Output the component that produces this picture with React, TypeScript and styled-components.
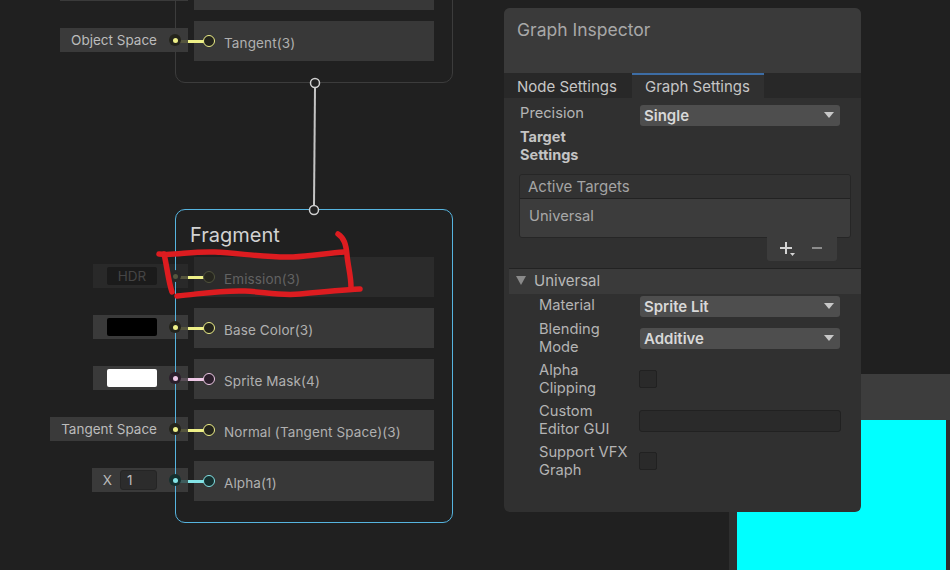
import styled, { createGlobalStyle } from 'styled-components';

type PortKind = 'yellow' | 'pink' | 'cyan';

const portColors: Record<PortKind, { line: string; fill: string; dim: string }> = {
  yellow: { line: '#eef088', fill: '#24241c', dim: '#55553e' },
  pink: { line: '#eec8e6', fill: '#2c1f2c', dim: '#5a4f58' },
  cyan: { line: '#84e4e7', fill: '#15302f', dim: '#3f5c5c' },
};

const GlobalStyle = createGlobalStyle`
  html, body {
    margin: 0;
    padding: 0;
    background: #202020;
    overflow: hidden;
  }
  * {
    box-sizing: border-box;
  }
`;

const Canvas = styled.div`
  position: relative;
  width: 950px;
  height: 570px;
  overflow: hidden;
  background: #202020;
  font-family: Inter, 'Liberation Sans', sans-serif;
  font-size: 14px;
  color: #b8b8b8;
`;

const Node = styled.div<{ $top: number; $height: number; $active?: boolean }>`
  position: absolute;
  left: 175px;
  top: ${(p) => p.$top}px;
  width: 278px;
  height: ${(p) => p.$height}px;
  padding: 0 0 22px 19px;
  display: flex;
  flex-direction: column;
  justify-content: flex-end;
  gap: 11px;
  &::after {
    content: '';
    position: absolute;
    inset: 0;
    border: 1px solid ${(p) => (p.$active ? '#56b4df' : '#3c3c3c')};
    border-radius: 10px;
    pointer-events: none;
    z-index: 1;
  }
`;

const NodeTitle = styled.div`
  margin-left: -4px;
  margin-bottom: -2px;
  font-size: 20px;
  line-height: 26px;
  color: #d2d2d2;
`;

const Row = styled.div<{ $dim?: boolean }>`
  position: relative;
  flex: none;
  width: 240px;
  height: 40px;
  padding: 13px 0 0 30px;
  font-size: 13.5px;
  letter-spacing: 0.12px;
  line-height: 18px;
  background: ${(p) => (p.$dim ? '#2b2b2b' : '#383838')};
  color: ${(p) => (p.$dim ? '#626262' : '#b0b0b0')};
`;

const Chip = styled.div<{ $dim?: boolean; $width?: number }>`
  position: absolute;
  right: calc(100% + 6px);
  top: 7px;
  height: 24px;
  width: ${(p) => (p.$width ? `${p.$width}px` : 'auto')};
  display: flex;
  align-items: center;
  justify-content: flex-end;
  padding-left: 11px;
  padding-right: 7px;
  white-space: nowrap;
  letter-spacing: 0;
  background: ${(p) => (p.$dim ? '#292929' : '#3a3a3a')};
  color: #bcbcbc;
`;

const Swatch = styled.div<{ $color: string }>`
  width: 50px;
  height: 18px;
  margin-left: 3px;
  border-radius: 2px;
  background: ${(p) => p.$color};
  display: flex;
  align-items: center;
  justify-content: center;
  color: #454545;
`;

const AxisLabel = styled.span`
  margin-right: 8px;
`;

const NumberField = styled.div`
  width: 37px;
  height: 20px;
  padding-left: 6px;
  line-height: 19px;
  border: 1px solid #252525;
  border-radius: 3px;
  background: #2c2c2c;
`;

const Dot = styled.span<{ $kind: PortKind; $dim?: boolean }>`
  position: relative;
  z-index: 2;
  flex: none;
  width: 12px;
  height: 12px;
  margin-left: 12px;
  border-radius: 50%;
  background: ${(p) => (p.$dim ? '#272727' : portColors[p.$kind].fill)};
  &::after {
    content: '';
    position: absolute;
    left: 3.5px;
    top: 3.5px;
    width: 5px;
    height: 5px;
    border-radius: 50%;
    background: ${(p) => (p.$dim ? '#55563f' : portColors[p.$kind].line)};
  }
`;

const Wire = styled.span<{ $kind: PortKind }>`
  position: absolute;
  left: -14px;
  top: 19px;
  width: 8px;
  height: 2.5px;
  background: ${(p) => portColors[p.$kind].dim};
  &::after {
    content: '';
    position: absolute;
    left: 8px;
    top: 0;
    width: 16px;
    height: 2.5px;
    background: ${(p) => portColors[p.$kind].line};
  }
`;

const Port = styled.span<{ $kind: PortKind; $dim?: boolean }>`
  position: absolute;
  left: 9px;
  top: 14px;
  width: 12px;
  height: 12px;
  border-radius: 50%;
  border: 1.5px solid ${(p) => (p.$dim ? '#50523c' : portColors[p.$kind].line)};
  background: ${(p) => (p.$dim ? '#26261f' : portColors[p.$kind].fill)};
`;

const Overlay = styled.svg`
  position: absolute;
  left: 0;
  top: 0;
  z-index: 3;
  pointer-events: none;
`;

const Preview = styled.div`
  position: absolute;
  left: 729px;
  top: 374px;
  right: 0;
  bottom: 0;
  display: flex;
  flex-direction: column;
  background: #2e2e2e;
`;

const PreviewHeader = styled.div`
  flex: none;
  height: 46px;
  background: #3d3d3d;
`;

const PreviewImage = styled.div`
  flex: 1;
  margin: 0 4px 0 8px;
  background: #00ffff;
`;

const Inspector = styled.div`
  position: absolute;
  z-index: 5;
  left: 504px;
  top: 8px;
  width: 357px;
  height: 504px;
  display: flex;
  flex-direction: column;
  border-radius: 6px;
  overflow: hidden;
  background: #303030;
`;

const InspectorHeader = styled.div`
  flex: none;
  height: 65px;
  padding: 10px 13px 0;
  font-size: 17.5px;
  line-height: 24px;
  color: #a8a8a8;
  background: #3a3a3a;
`;

const Tabs = styled.div`
  flex: none;
  display: flex;
  height: 25px;
  background: #282828;
`;

const Tab = styled.div<{ $active?: boolean }>`
  padding-left: 13px;
  width: ${(p) => (p.$active ? '132px' : '128px')};
  font-size: 15px;
  line-height: 23px;
  color: #c6c6c6;
  border-top: 2px solid ${(p) => (p.$active ? '#3d6da5' : 'transparent')};
  background: ${(p) => (p.$active ? '#303030' : 'transparent')};
`;

const Body = styled.div`
  flex: 1;
  display: flex;
  flex-direction: column;
  padding-top: 6px;
`;

const FieldRow = styled.div<{ $indent?: boolean }>`
  display: flex;
  align-items: flex-start;
  margin-bottom: 5px;
  padding-left: ${(p) => (p.$indent ? 35 : 16)}px;
`;

const FieldLabel = styled.div<{ $indent?: boolean }>`
  flex: none;
  width: ${(p) => (p.$indent ? 101 : 120)}px;
  padding-right: 6px;
  line-height: 18px;
  font-size: 14.7px;
  color: #b4b4b4;
`;

const HeadingLabel = styled.div`
  width: 90px;
  margin: -1px 0 0 16px;
  font-weight: 700;
  font-size: 14.5px;
  line-height: 18px;
  color: #c4c4c4;
`;

const Dropdown = styled.div<{ $top?: number }>`
  position: relative;
  width: 200px;
  height: 21px;
  margin-top: ${(p) => p.$top ?? 0}px;
  margin-bottom: -2px;
  padding-left: 4px;
  font-weight: 600;
  font-size: 15px;
  line-height: 21px;
  color: #d8d8d8;
  background: #4e4e4e;
  border-radius: 3px;
  &::after {
    content: '';
    position: absolute;
    right: 6px;
    top: 7px;
    border-style: solid;
    border-width: 6px 5px 0;
    border-color: #c8c8c8 transparent transparent;
  }
`;

const Checkbox = styled.div`
  width: 18px;
  height: 18px;
  margin: 9px 0 0 -1px;
  background: #2a2a2a;
  border: 1px solid #212121;
  border-radius: 2px;
`;

const TextField = styled.div`
  width: 202px;
  height: 22px;
  margin: 8px 0 0 -1px;
  background: #2a2a2a;
  border: 1px solid #212121;
  border-radius: 3px;
`;

const ListBox = styled.div`
  width: 332px;
  margin: 10px 0 0 15px;
  border-radius: 3px;
  overflow: hidden;
  border: 1px solid #262626;
`;

const ListHeader = styled.div`
  height: 24px;
  padding-left: 8px;
  font-size: 15px;
  line-height: 23px;
  color: #a4a4a4;
  background: #323232;
  border-bottom: 1px solid #222;
`;

const ListBody = styled.div`
  height: 38px;
  padding: 8px 0 0 9px;
  font-size: 14.7px;
  line-height: 18px;
  color: #a8a8a8;
  background: #3c3c3c;
`;

const ListFooter = styled.div`
  align-self: flex-end;
  width: 70px;
  height: 24px;
  margin-right: 24px;
  margin-top: -1px;
  background: #3c3c3c;
  border-radius: 0 0 3px 3px;
`;

const Foldout = styled.div`
  display: flex;
  align-items: center;
  height: 26px;
  margin: 7px 0 2px 5px;
  padding: 0 0 2px 7px;
  border-top: 1px solid #222;
  background: #3a3a3a;
  line-height: 24px;
  font-size: 15px;
  color: #b8b8b8;
  &::before {
    content: '';
    margin-right: 8px;
    border-style: solid;
    border-width: 9px 5px 0;
    border-color: #8a8a8a transparent transparent;
  }
`;

function App() {
  return (
    <Canvas>
      <GlobalStyle />

      <Node $top={-113} $height={196}>
        <Row>
          <Chip $width={128}>
            <Dot $kind="yellow" />
          </Chip>
        </Row>
        <Row>
          <Chip>
            Object Space
            <Dot $kind="yellow" />
          </Chip>
          <Wire $kind="yellow" />
          <Port $kind="yellow" />
          Tangent(3)
        </Row>
      </Node>

      <Node $top={209} $height={314} $active>
        <NodeTitle>Fragment</NodeTitle>
        <Row $dim>
          <Chip $dim>
            <Swatch $color="#1b1b1b">HDR</Swatch>
            <Dot $kind="yellow" $dim />
          </Chip>
          <Wire $kind="yellow" />
          <Port $kind="yellow" $dim />
          Emission(3)
        </Row>
        <Row>
          <Chip>
            <Swatch $color="#000000" />
            <Dot $kind="yellow" />
          </Chip>
          <Wire $kind="yellow" />
          <Port $kind="yellow" />
          Base Color(3)
        </Row>
        <Row>
          <Chip>
            <Swatch $color="#ffffff" />
            <Dot $kind="pink" />
          </Chip>
          <Wire $kind="pink" />
          <Port $kind="pink" />
          Sprite Mask(4)
        </Row>
        <Row>
          <Chip>
            Tangent Space
            <Dot $kind="yellow" />
          </Chip>
          <Wire $kind="yellow" />
          <Port $kind="yellow" />
          Normal (Tangent Space)(3)
        </Row>
        <Row>
          <Chip>
            <AxisLabel>X</AxisLabel>
            <NumberField>1</NumberField>
            <Dot $kind="cyan" />
          </Chip>
          <Wire $kind="cyan" />
          <Port $kind="cyan" />
          Alpha(1)
        </Row>
      </Node>

      <Overlay width="950" height="570" viewBox="0 0 950 570">
        <path d="M315 88 L314 205" stroke="#c4c4c4" strokeWidth="2" fill="none" />
        <circle cx="315" cy="83" r="4.5" stroke="#d0d0d0" strokeWidth="1.5" fill="#202020" />
        <circle cx="314" cy="210" r="4.5" stroke="#d0d0d0" strokeWidth="1.5" fill="#202020" />
        <g stroke="#dd1c20" strokeWidth="5.5" strokeLinecap="round" strokeLinejoin="round" fill="none">
          <path d="M159 254 C175 256 190 251 215 252 C240 253 265 258 293 257 C312 256 328 253 344 252" />
          <path d="M338 234 C344 238 346 244 347 255 C348 266 351 276 351 287" />
          <path d="M164 254 C167 266 168 280 172 292" />
          <path d="M177 296 C200 294 220 290 245 291 C265 292 280 296 300 294 C320 292 340 290 360 289" />
        </g>
      </Overlay>

      <Preview>
        <PreviewHeader />
        <PreviewImage />
      </Preview>

      <Inspector>
        <InspectorHeader>Graph Inspector</InspectorHeader>
        <Tabs>
          <Tab>Node Settings</Tab>
          <Tab $active>Graph Settings</Tab>
        </Tabs>
        <Body>
          <FieldRow>
            <FieldLabel>Precision</FieldLabel>
            <Dropdown $top={1}>Single</Dropdown>
          </FieldRow>
          <HeadingLabel>Target Settings</HeadingLabel>
          <ListBox>
            <ListHeader>Active Targets</ListHeader>
            <ListBody>Universal</ListBody>
          </ListBox>
          <ListFooter>
            <svg width="70" height="24" viewBox="0 0 70 24">
              <path d="M13 11 H25 M19 5 V17" stroke="#d4d4d4" strokeWidth="2" fill="none" />
              <path d="M23 16 H28 L25.5 19 Z" fill="#d4d4d4" />
              <path d="M45 11 H55" stroke="#8c8c8c" strokeWidth="2" fill="none" />
            </svg>
          </ListFooter>
          <Foldout>Universal</Foldout>
          <FieldRow $indent>
            <FieldLabel $indent>Material</FieldLabel>
            <Dropdown>Sprite Lit</Dropdown>
          </FieldRow>
          <FieldRow $indent>
            <FieldLabel $indent>Blending Mode</FieldLabel>
            <Dropdown $top={8}>Additive</Dropdown>
          </FieldRow>
          <FieldRow $indent>
            <FieldLabel $indent>Alpha Clipping</FieldLabel>
            <Checkbox />
          </FieldRow>
          <FieldRow $indent>
            <FieldLabel $indent>Custom Editor GUI</FieldLabel>
            <TextField />
          </FieldRow>
          <FieldRow $indent>
            <FieldLabel $indent>Support VFX Graph</FieldLabel>
            <Checkbox />
          </FieldRow>
        </Body>
      </Inspector>
    </Canvas>
  );
}

export default App;
